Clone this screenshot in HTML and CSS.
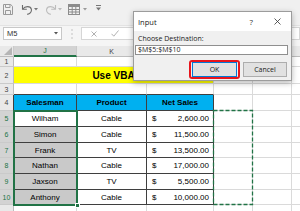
FILE: index.html
```html
<!DOCTYPE html>
<html>
<head>
<meta charset="utf-8">
<title>Excel - Input</title>
<link rel="stylesheet" href="styles.css">
</head>
<body>
<div class="app">
  <div class="qat">
    <svg class="i-save" width="10" height="11" viewBox="0 0 10 11"><path d="M.5.5h7.2l1.8 1.8v8.2h-9z" fill="none" stroke="#9a9a9a"/><path d="M2.5.5v3h4.5v-3M2.5 10.5v-4h5v4" fill="none" stroke="#9a9a9a"/></svg>
    <svg class="i-undo" width="12" height="11" viewBox="0 0 12 11"><path d="M1.5 1v4.3h4.3" fill="none" stroke="#6b6b6b" stroke-width="1.1"/><path d="M1.9 5C3.8 2 9.6 1.6 10.4 5.4c.5 2.6-1.4 4.5-4.2 5" fill="none" stroke="#6b6b6b" stroke-width="1.1"/></svg>
    <svg class="i-caret" width="4" height="3" viewBox="0 0 4 3"><path d="M0 0h4L2 2.5z" fill="#777"/></svg>
    <svg class="i-redo" width="12" height="11" viewBox="0 0 12 11"><path d="M10.5 1v4.3H6.2" fill="none" stroke="#bcbcbc" stroke-width="1.1"/><path d="M10.1 5C8.2 2 2.4 1.6 1.6 5.4c-.5 2.6 1.4 4.5 4.2 5" fill="none" stroke="#bcbcbc" stroke-width="1.1"/></svg>
    <svg class="i-caret2" width="4" height="3" viewBox="0 0 4 3"><path d="M0 0h4L2 2.5z" fill="#bcbcbc"/></svg>
    <svg class="i-table" width="12" height="11" viewBox="0 0 12 11"><rect x=".5" y=".5" width="11" height="10" fill="none" stroke="#8c8c8c"/><rect x=".5" y=".5" width="11" height="2.5" fill="#8c8c8c"/><path d="M.5 5.5h11M.5 8h11M4.2 3v7.5M7.8 3v7.5" stroke="#8c8c8c" fill="none"/></svg>
    <svg class="i-caret3" width="4" height="3" viewBox="0 0 4 3"><path d="M0 0h4L2 2.5z" fill="#999"/></svg>
    <svg class="i-custom" width="5" height="6" viewBox="0 0 5 6"><path d="M0 .5h5" stroke="#777"/><path d="M0 2.5h5L2.5 5.5z" fill="#777"/></svg>
  </div>
  <div class="fbar">
    <div class="namebox"><span class="nb-text">M5</span><svg class="nb-caret" width="4" height="3" viewBox="0 0 4 3"><path d="M0 0h4L2 2.5z" fill="#555"/></svg></div>
    <svg class="dots" width="2" height="10" viewBox="0 0 2 10"><circle cx="1" cy="1" r=".7" fill="#b2b2b2"/><circle cx="1" cy="5" r=".7" fill="#b2b2b2"/><circle cx="1" cy="9" r=".7" fill="#b2b2b2"/></svg>
    <div class="formula">
      <svg class="f-x" width="6" height="6" viewBox="0 0 6 6"><path d="M.5.5l5 5M5.5.5l-5 5" stroke="#a8a8a8" stroke-width=".9"/></svg>
      <svg class="f-ok" width="8" height="7" viewBox="0 0 8 7"><path d="M.5 3.8l2.3 2.4L7.5.5" fill="none" stroke="#a8a8a8" stroke-width=".9"/></svg>
    </div>
  </div>
  <div class="sheet">
    <div class="grid">
      <div class="c hdr corner"><svg width="8" height="8" viewBox="0 0 8 8"><path d="M8 0v8H0z" fill="#b5b5b5"/></svg></div>
      <div class="c hdr col sel-col">J</div>
      <div class="c hdr col">K</div>
      <div class="c hdr col"></div>
      <div class="c hdr col"></div>
      <div class="c hdr col"></div>
      <div class="c hdr col"></div>

      <div class="c rh">1</div><div class="c"></div><div class="c"></div><div class="c"></div><div class="c"></div><div class="c"></div><div class="c"></div>

      <div class="c rh">2</div><div class="c title">Use VBA</div><div class="c"></div><div class="c"></div><div class="c"></div>

      <div class="c rh">3</div><div class="c top"></div><div class="c top"></div><div class="c top"></div><div class="c"></div><div class="c"></div><div class="c"></div>

      <div class="c rh rh-t">4</div><div class="c t th">Salesman</div><div class="c t th">Product</div><div class="c t th">Net Sales</div><div class="c"></div><div class="c"></div><div class="c"></div>

      <div class="c rh rh-s">5</div><div class="c t mid">Wilham</div><div class="c t mid">Cable</div><div class="c t money"><span>$</span><span>2,600.00</span></div><div class="c"></div><div class="c"></div><div class="c"></div>
      <div class="c rh rh-s">6</div><div class="c t mid shade">Simon</div><div class="c t mid">Cable</div><div class="c t money"><span>$</span><span>11,500.00</span></div><div class="c"></div><div class="c"></div><div class="c"></div>
      <div class="c rh rh-s">7</div><div class="c t mid shade">Frank</div><div class="c t mid">TV</div><div class="c t money"><span>$</span><span>13,500.00</span></div><div class="c"></div><div class="c"></div><div class="c"></div>
      <div class="c rh rh-s">8</div><div class="c t mid shade">Nathan</div><div class="c t mid">Cable</div><div class="c t money"><span>$</span><span>17,000.00</span></div><div class="c"></div><div class="c"></div><div class="c"></div>
      <div class="c rh rh-s">9</div><div class="c t mid shade">Jaxson</div><div class="c t mid">TV</div><div class="c t money"><span>$</span><span>5,500.00</span></div><div class="c"></div><div class="c"></div><div class="c"></div>
      <div class="c rh rh-s">10</div><div class="c t mid shade">Anthony</div><div class="c t mid">Cable</div><div class="c t money"><span>$</span><span>10,000.00</span></div><div class="c"></div><div class="c"></div><div class="c"></div>

      <div class="c rh"></div><div class="c"></div><div class="c"></div><div class="c"></div><div class="c"></div><div class="c"></div><div class="c"></div>
    </div>
    <div class="selection"></div>
    <div class="handle"></div>
    <svg class="ants" width="42" height="97" viewBox="0 0 42 97"><rect x="1.5" y="1.5" width="39" height="94" fill="none" stroke="#217346" stroke-width="1.3" stroke-dasharray="4 2"/></svg>
  </div>

  <div class="dialog">
    <div class="dtitle">
      <span class="dt-text">Input</span>
      <span class="dt-q">?</span>
      <svg class="dt-x" width="7" height="7" viewBox="0 0 7 7"><path d="M.5.5l6 6M6.5.5l-6 6" stroke="#333" stroke-width=".8"/></svg>
    </div>
    <div class="dbody">
      <div class="dlabel">Choose Destination:</div>
      <div class="dinput">$M$5:$M$10</div>
      <div class="dbtns">
        <div class="okwrap"><div class="btn ok">OK</div></div>
        <div class="btn cancel">Cancel</div>
      </div>
    </div>
  </div>
</div>
</body>
</html>
```

FILE: styles.css
```css
* { box-sizing: border-box; margin: 0; padding: 0; }
html, body { width: 300px; height: 211px; overflow: hidden; background: #fff; }
body { font-family: "Liberation Sans", Arial, sans-serif; color: #000; }

.app { position: relative; width: 300px; height: 211px; overflow: hidden; }

/* quick access toolbar */
.qat {
  height: 26px;
  background: #f0f0f0;
  border-bottom: 1px solid #e3e3e3;
  display: flex;
  align-items: flex-start;
  padding: 4px 0 0 3px;
}
.qat svg { display: block; flex: none; }
.i-undo { margin-left: 8px; }
.i-caret { margin-left: 1px; margin-top: 4px; }
.i-redo { margin-left: 7px; }
.i-caret2 { margin-left: 1px; margin-top: 4px; }
.i-table { margin-left: 6px; }
.i-caret3 { margin-left: 3px; margin-top: 4px; }
.i-custom { margin-left: 9px; margin-top: 1px; }

/* formula bar */
.fbar {
  height: 20px;
  background: #f5f5f5;
  display: flex;
  align-items: flex-start;
  padding-top: 1px;
}
.namebox {
  margin-left: 3px;
  width: 59px;
  height: 13px;
  background: #fff;
  border: 1px solid #c8c8c8;
  display: flex;
  align-items: center;
  padding-left: 3px;
  font-size: 7.5px;
  color: #333;
}
.nb-caret { margin-left: auto; margin-right: 3px; display: block; }
.dots { display: block; margin-left: 9px; margin-top: 2px; }
.formula {
  margin-left: 8px;
  flex: 1;
  height: 13px;
  background: #fff;
  border: 1px solid #d6d6d6;
  display: flex;
  align-items: center;
}
.f-x { display: block; margin-left: 9px; }
.f-ok { display: block; margin-left: 14px; }

/* sheet grid */
.sheet { position: relative; height: 165px; overflow: hidden; }
.grid {
  display: grid;
  grid-template-columns: 14px 63px 70px 67px 39px 39px 40px;
  grid-template-rows: 11px 10px 17px 11px 16px 16px 16px 15px 16px 16px 15px 16px;
  font-size: 8px;
}
.c {
  border-right: 1px solid #dadada;
  border-bottom: 1px solid #dadada;
  display: flex;
  align-items: center;
  overflow: hidden;
  white-space: nowrap;
}
.hdr {
  background: #e9e9e9;
  border-right-color: #cacaca;
  border-bottom-color: #bdbdbd;
  font-size: 7px;
  color: #444;
  justify-content: center;
}
.corner { justify-content: flex-end; align-items: flex-end; padding: 0 1px 1px 0; }
.corner svg { display: block; }
.sel-col {
  background: #d3d3d3;
  color: #217346;
  border-bottom: 2px solid #217346;
}
.rh {
  background: #e9e9e9;
  border-right-color: #bdbdbd;
  border-bottom-color: #cacaca;
  font-size: 7px;
  color: #444;
  justify-content: center;
}
.rh-t { border-right-color: #3f3f3f; }
.rh-s { background: #d3d3d3; color: #217346; border-right-color: #217346; }

.title {
  grid-column: span 3;
  background: #ffff00;
  justify-content: center;
  font-weight: bold;
  font-size: 10px;
}
.top { border-bottom-color: #3f3f3f; }
.t { border-right-color: #3f3f3f; border-bottom-color: #3f3f3f; }
.th { background: #00b0f0; font-weight: bold; justify-content: center; }
.mid { justify-content: center; }
.shade { background: #c9c9c9; }
.money { justify-content: space-between; padding: 0 4px 0 5px; }

/* overlays on the grid */
.selection {
  position: absolute;
  left: 13px;
  top: 64px;
  width: 65px;
  height: 96px;
  border: 2px solid #217346;
  pointer-events: none;
}
.handle {
  position: absolute;
  left: 75px;
  top: 157px;
  width: 5px;
  height: 5px;
  background: #217346;
  border: 1px solid #fff;
}
.ants { position: absolute; left: 212px; top: 63px; display: block; }

/* dialog */
.dialog {
  position: absolute;
  left: 133px;
  top: 11px;
  width: 159px;
  height: 70px;
  border: 1px solid #9c9c9c;
  background: #f0f0f0;
  box-shadow: 0 2px 6px rgba(0, 0, 0, 0.28);
  font-family: "Open Sans", "Noto Sans", sans-serif;
  color: #1a1a1a;
  display: flex;
  flex-direction: column;
}
.dtitle {
  height: 19px;
  background: #fff;
  display: flex;
  align-items: center;
  padding-left: 4px;
  font-size: 7.5px;
}
.dt-q { margin-left: auto; font-size: 8px; color: #333; }
.dt-x { display: block; margin-left: 21px; margin-right: 10px; }
.dbody {
  flex: 1;
  display: flex;
  flex-direction: column;
  padding: 3px 3px 1px 1px;
}
.dlabel { height: 9px; line-height: 9px; font-size: 7px; margin-left: 3px; }
.dinput {
  margin-top: 2px;
  height: 10px;
  background: #fff;
  border: 1px solid #8f8f8f;
  font-size: 7px;
  line-height: 8px;
  padding-left: 2px;
}
.dbtns {
  margin-top: 5px;
  display: flex;
  justify-content: flex-end;
  align-items: center;
  gap: 3px;
  padding-right: 1px;
}
.okwrap {
  width: 51px;
  height: 19px;
  border: 2px solid #e8141c;
  border-radius: 3px;
  padding: 0 1px;
  display: flex;
  align-items: center;
}
.btn {
  height: 15px;
  background: #e1e1e1;
  border: 1px solid #adadad;
  font-size: 7px;
  display: flex;
  align-items: center;
  justify-content: center;
}
.ok { width: 45px; border-color: #0078d7; }
.cancel { width: 44px; }
```
